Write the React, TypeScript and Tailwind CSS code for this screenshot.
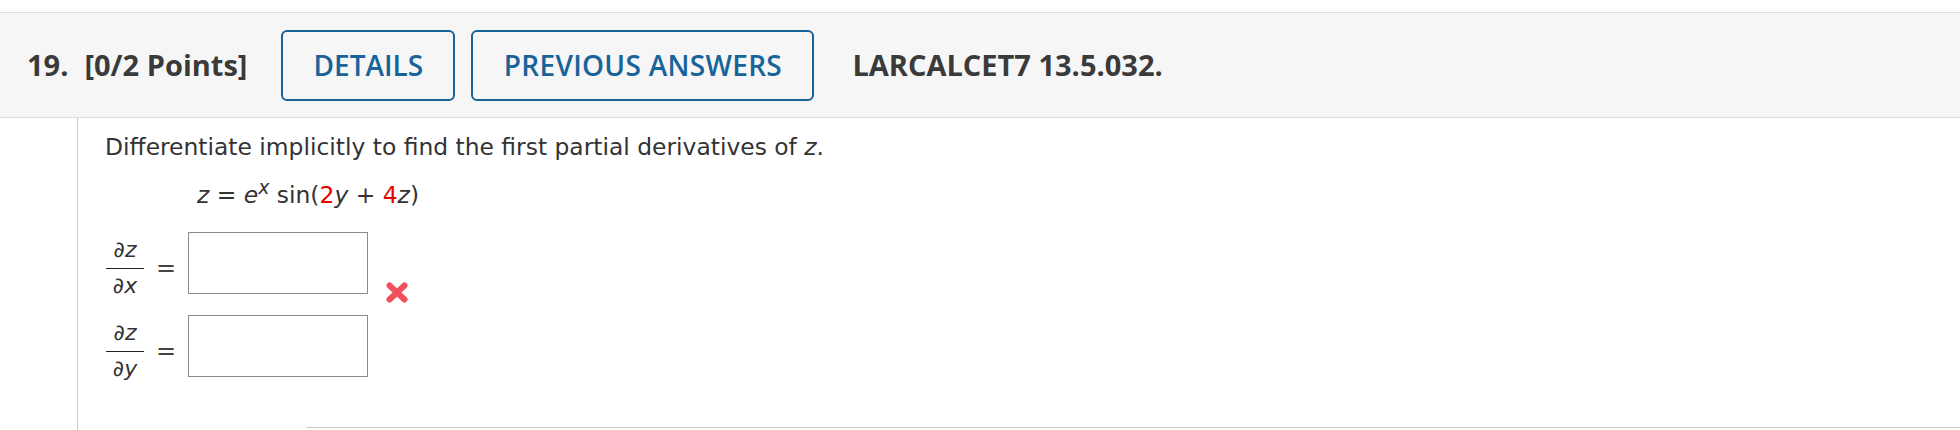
import React from 'react'

const blue = 'text-[#17639a] border-[#17639a]'

const Fraction: React.FC<{ top: string; bottom: string }> = ({ top, bottom }) => {
  return (
    <div className="flex flex-col items-center w-[38px] italic text-[22px] text-[#333333]">
      <span className="leading-[22px] pb-[7px]">{top}</span>
      <span className="w-full h-px bg-[#222222]" />
      <span className="leading-[22px] pt-[6px]">{bottom}</span>
    </div>
  )
}

const WrongMark: React.FC = () => {
  return (
    <svg width="24" height="23" viewBox="0 0 24 23" className="self-end ml-[17px] blur-[0.4px]">
      <g stroke="#f24f5c" strokeWidth="6" strokeLinecap="round">
        <line x1="4.5" y1="4.5" x2="19.5" y2="18.5" />
        <line x1="19.5" y1="4.5" x2="4.5" y2="18.5" />
      </g>
    </svg>
  )
}

const AnswerRow: React.FC<{ top: string; bottom: string; wrong?: boolean; className?: string }> = ({
  top,
  bottom,
  wrong,
  className,
}) => {
  return (
    <div className={`flex items-center h-[72px] ${className ?? ''}`}>
      <div className="ml-px">
        <Fraction top={top} bottom={bottom} />
      </div>
      <span className="ml-[12px] text-[24px] leading-none text-[#444444]">=</span>
      <div className="ml-[12px] mb-[10px] w-[180px] h-[62px] border border-[#8a8a8a] bg-white" />
      {wrong && <WrongMark />}
    </div>
  )
}

const App: React.FC = () => {
  return (
    <div className="w-[1960px] h-[430px] bg-white overflow-hidden font-['DejaVu_Sans',Verdana,sans-serif]">
      <div className="h-3" />
      <div className="h-[106px] bg-[#f6f6f6] border-y border-[#dddddd] flex items-center pl-[27px] font-['Open_Sans',sans-serif] text-[#3a3a3a]">
        <span className="text-[29px] font-bold">19.</span>
        <span className="ml-[16px] text-[29px] font-bold">[0/2 Points]</span>
        <button className={`ml-[34px] w-[174px] h-[71px] border-2 rounded-md text-[28px] font-semibold ${blue}`}>
          DETAILS
        </button>
        <button className={`ml-[16px] w-[343px] h-[71px] border-2 rounded-md text-[28px] font-semibold tracking-[0.3px] ${blue}`}>
          PREVIOUS ANSWERS
        </button>
        <span className="ml-[38px] text-[29px] font-bold">LARCALCET7 13.5.032.</span>
      </div>
      <div className="flex">
        <div className="w-[77px] shrink-0" />
        <div className="flex-1 border-l border-[#cccccc] h-[312px] pl-[27px] pt-[15px] text-[#333333]">
          <p className="text-[23.4px] leading-[28px]">
            Differentiate implicitly to find the first partial derivatives of <i>z</i>.
          </p>
          <p className="mt-[20px] ml-[92px] text-[23.4px] leading-[28px]">
            <i>z</i> = <i>e</i>
            <sup className="italic text-[19px]">x</sup> sin(<span className="text-[#e60000]">2</span>
            <i>y</i> + <span className="text-[#e60000]">4</span>
            <i>z</i>)
          </p>
          <AnswerRow className="mt-[23px]" top="∂z" bottom="∂x" wrong />
          <AnswerRow className="mt-[11px]" top="∂z" bottom="∂y" />
          <div className="mt-[40px] ml-[201px] border-t border-[#cccccc]" />
        </div>
      </div>
    </div>
  )
}

export default App
